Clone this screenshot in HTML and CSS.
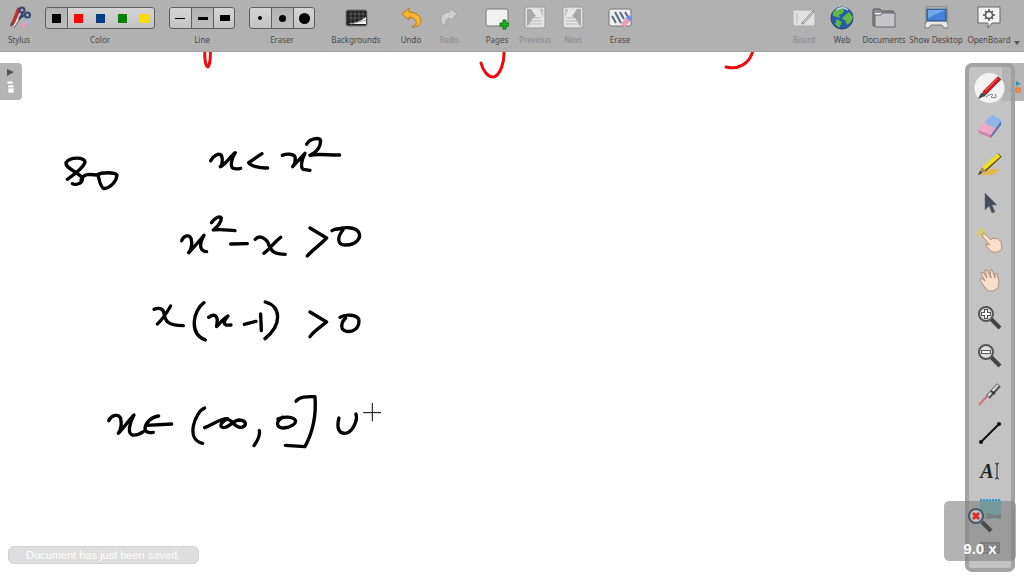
FILE: index.html
```html
<!DOCTYPE html>
<html lang="en">
<head>
<meta charset="utf-8">
<title>OpenBoard</title>
<link rel="stylesheet" href="styles.css">
</head>
<body>
<header class="toolbar">
  <div class="section">
    <button class="tool"><svg class="icon" viewBox="0 0 24 24"><path d="M5 20L12 2" stroke="#b9352d" stroke-width="3.500"/><path d="M3 21l1-5 3 1z" fill="#555"/><path d="M7 21L15 7" stroke="#eee" stroke-width="2.500"/><path d="M7 22L16 8" stroke="#555" stroke-width="1"/><g fill="none" stroke="#34466f" stroke-width="2"><circle cx="15" cy="4" r="2.500"/><circle cx="20.500" cy="9" r="2.500"/><path d="M16 6l-4 8M18 9l-6 3"/></g><path d="M13 19l6-5 3 2-5 6z" fill="#e59cbd"/><path d="M17 16l3-3 3 2-2 3z" fill="#a3b6e6"/></svg><span>Stylus</span></button>
  </div>
  <div class="group">
    <div class="segment" role="group" aria-label="Color">
      <button class="choice on" aria-label="Black"><i class="swatch black"></i></button><button class="choice plain" aria-label="Red"><i class="swatch red"></i></button><button class="choice plain" aria-label="Blue"><i class="swatch blue"></i></button><button class="choice plain" aria-label="Green"><i class="swatch green"></i></button><button class="choice plain" aria-label="Yellow"><i class="swatch yellow"></i></button>
    </div>
    <span>Color</span>
  </div>
  <div class="group">
    <div class="segment" role="group" aria-label="Line">
      <button class="choice" aria-label="Fine line"><i class="line fine"></i></button><button class="choice on" aria-label="Medium line"><i class="line medium"></i></button><button class="choice" aria-label="Strong line"><i class="line strong"></i></button>
    </div>
    <span>Line</span>
  </div>
  <div class="group">
    <div class="segment" role="group" aria-label="Eraser">
      <button class="choice" aria-label="Small eraser"><i class="dot small"></i></button><button class="choice on" aria-label="Medium eraser"><i class="dot mid"></i></button><button class="choice" aria-label="Large eraser"><i class="dot large"></i></button>
    </div>
    <span>Eraser</span>
  </div>
  <div class="section bounded">
    <button class="tool wide"><svg class="icon" viewBox="0 0 24 24"><rect x="2" y="4" width="21" height="16" rx="2" fill="#222" stroke="#777"/><path d="M4 8h17M4 12h17M7 5v13M11 5v13M15 5v13M19 5v13" stroke="#777" stroke-width=".6"/><path d="M4 18c7-1 13-3 18-7v7z" fill="#f4f4f4"/><path d="M7 18l15-4" stroke="#999"/></svg><span>Backgrounds</span></button>
  </div>
  <div class="section">
    <button class="tool"><svg class="icon" viewBox="0 0 24 24"><path d="M3 8l7-6v4c7 0 12 4 12 9 0 4-4 6-9 6 4-2 5-4 4-6-1-2-3-4-7-4v3z" fill="#fcb52e" stroke="#b7771a"/></svg><span>Undo</span></button>
    <button class="tool" disabled><svg class="icon" viewBox="0 0 24 24"><path d="M20 8l-7-6v4C7 6 4 10 4 14c0 4 2 5 7 5-3-1-3-3-2-4 1-2 2-3 4-3v3z" fill="#d2d2d2" stroke="#a4a4a4"/></svg><span>Redo</span></button>
  </div>
  <div class="section pages">
    <button class="tool"><svg class="icon" viewBox="0 0 24 24"><rect x="1" y="3" width="22" height="17" rx="2" fill="#f1f1f1" stroke="#777"/><path d="M18 14h3v3h3v3h-3v3h-3v-3h-3v-3h3z" fill="#12b51b" stroke="#08750c"/></svg><span>Pages</span></button>
    <button class="tool" disabled><svg class="icon" viewBox="0 0 24 24"><rect x="2" y="1" width="20" height="21" rx="2" fill="#e6e6e6" stroke="#999"/><path d="M4 3h16v17H4z" fill="#a8a8a8"/><path d="M8 3h9l1 3 2 1v13H5l5-8 3-2-3-4z" fill="#ececec"/><path d="M17 3h3v9z" fill="#c2c2c2"/><path d="M10 12h8M8 15h11M6 18h13" stroke="#b8b8b8"/></svg><span>Previous</span></button>
    <button class="tool" disabled><svg class="icon" viewBox="0 0 24 24"><rect x="2" y="1" width="20" height="21" rx="2" fill="#e6e6e6" stroke="#999"/><path d="M4 3h16v17H4z" fill="#a8a8a8"/><path d="M16 3H7L6 6 4 7v13h15l-5-8-3-2 3-4z" fill="#ececec"/><path d="M7 3H4v9z" fill="#c2c2c2"/><path d="M6 12h8M5 15h11M5 18h13" stroke="#b8b8b8"/></svg><span>Next</span></button>
  </div>
  <div class="section last">
    <button class="tool"><svg class="icon" viewBox="0 0 24 24"><rect x="1" y="3" width="22" height="17" rx="2" fill="#efefef" stroke="#777"/><path d="M4 10l4 7M7 6l6 11M12 6l4 7M17 6l3 5" stroke="#596b84" stroke-width="2"/><path d="M13 18l5-6 4 3-5 6z" fill="#f199bb"/><path d="M18 12l3-3 3 3-2 3z" fill="#6d8fe2"/></svg><span>Erase</span></button>
  </div>
  <nav class="section modes">
    <button class="tool" disabled><svg class="icon" viewBox="0 0 24 24"><rect x="1" y="4" width="22" height="16" rx="1" fill="#e7e7e7" stroke="#aaa"/><path d="M5 7v10" stroke="#bbb"/><path d="M10 18L22 5" stroke="#888" stroke-width="2.500"/><path d="M11 17L21 6" stroke="#eee"/></svg><span>Board</span></button>
    <button class="tool"><svg class="icon" viewBox="0 0 24 24"><circle cx="12" cy="12" r="11" fill="#245ca8" stroke="#274169"/><path d="M3 6l5-4 6 1-1 4-4 2 1 3-3-1-4-1zM14 10l5-4 4 5-2 5-4 3-2-5-3-1zM7 13l5 3-3 6-4-4z" fill="#62b744"/><path d="M6 4c4-3 9-3 12 0" fill="none" stroke="#bfdeee" stroke-width="1.500"/></svg><span>Web</span></button>
    <button class="tool docs"><svg class="icon" viewBox="0 0 24 24"><path d="M1 20V4q0-1 1-1h6l2 2h11v15z" fill="#8d8d92" stroke="#555"/><path d="M3 7h16v5H3z" fill="#f1f1f1"/><path d="M3 20V9h6l1-2h13v14H4z" fill="#c5c5ca" stroke="#66666c"/></svg><span>Documents</span></button>
    <button class="tool desk"><svg class="icon" viewBox="0 0 24 24"><path d="M2 1h21v16h1v5h-4l-2-3H7l-2 3H1v-5h1z" fill="#e7e7e7" stroke="#777"/><rect x="3" y="3" width="19" height="12" fill="#4384da" stroke="#24456f"/><path d="M4 4h17L4 12z" fill="#74a8ec"/></svg><span>Show Desktop</span></button>
    <button class="tool brand"><svg class="icon" viewBox="0 0 24 24"><path d="M1 1h22v16h-8l-4 5v-5H1z" fill="#f4f4f4" stroke="#666"/><circle cx="12" cy="9" r="3.500" fill="none" stroke="#555" stroke-width="1.500"/><path d="M12 3v3M12 12v3M6 9h3M15 9h3M8 5l2 2M14 11l2 2M8 13l2-2M14 7l2-2" stroke="#555" stroke-width="1.500"/></svg><span>OpenBoard</span></button>
    <button class="more" aria-label="More"></button>
  </nav>
</header>
<main class="board">
  <svg class="ink" viewBox="0 52 1024 524" role="img" aria-label="Handwritten inequality working">
    <g stroke="#ec0b0e" stroke-width="3">
      <path d="M205 46C204 60 206 67 208 67C210 64 211 58 210 46"/>
      <path d="M481 63C483 71 488 77 493 77C500 76 505 63 504 47"/>
      <path d="M726 67C738 70 750 64 753 50"/>
    </g>
    <g stroke="#000" stroke-width="10" transform="translate(50 130) scale(.3333)">
      <path d="M105 98C106 80 60 80 48 98C46 118 92 128 97 146C98 162 76 166 67 161M105 98C98 116 72 134 52 148M93 150C100 130 120 132 146 136M140 135C155 126 195 126 201 135C200 155 180 175 162 176C150 170 148 150 145 138"/>
      <path d="M482 92C490 76 508 68 514 76C520 88 516 108 511 110C525 105 540 80 556 68C545 85 540 108 548 114Q558 119 572 115"/>
      <path d="M636 71L596 98C600 108 630 115 653 114"/>
      <path d="M697 76C712 70 730 72 735 80C738 95 732 105 728 110L765 70C755 90 750 112 760 118L780 121"/>
      <path d="M770 43C778 26 808 20 812 32C812 50 800 68 780 76C800 70 840 76 869 75"/>
      <path d="M395 332C402 316 418 313 423 325C430 345 420 363 416 368C430 355 450 330 462 316C448 340 447 364 470 365"/>
      <path d="M484 278C495 264 510 256 514 264C514 280 500 292 490 300C510 296 535 301 555 302M542 342L592 341"/>
      <path d="M616 328C625 316 645 320 655 340C660 360 670 373 706 373M692 322C675 335 660 355 642 370"/>
      <path d="M780 294L830 324C810 345 785 362 772 378"/>
      <path d="M846 302C860 294 870 294 879 300C862 320 860 346 887 345C920 345 935 323 926 306C915 290 880 291 860 298"/>
    </g>
    <g stroke="#000" stroke-width="10" transform="translate(50 270) scale(.3333)">
      <path d="M312 118C325 112 340 115 342 130C345 150 350 167 400 167M362 108C352 125 337 150 322 162"/>
      <path d="M462 98C430 120 415 190 466 210M646 96C695 110 696 165 645 206"/>
      <path d="M476 142C490 132 500 134 502 150L500 170C510 160 520 145 534 138C520 155 515 168 543 165M583 163L618 154M632 132L634 182"/>
      <path d="M780 126L830 156C810 172 790 185 780 200"/>
      <path d="M870 142C885 132 925 132 927 152C927 175 910 187 890 184C870 180 872 158 887 144"/>
      <path d="M176 452C185 435 205 430 212 445C216 465 212 480 205 490C225 470 240 445 252 435C238 460 232 490 247 495C260 497 273 490 280 485"/>
      <path d="M326 438C305 440 287 458 285 474C285 486 295 490 310 487M290 466L365 462"/>
      <path d="M464 414C435 425 405 510 458 520"/>
      <path d="M464 473C490 462 515 445 533 446C515 454 505 470 520 473C540 472 550 450 568 450C592 452 590 468 575 472C555 475 550 455 538 450"/>
      <path d="M628 482C632 500 620 515 612 527M698 442C675 455 680 473 700 474C724 472 740 461 736 451C730 439 700 439 684 447"/>
      <path d="M738 394C750 378 775 380 795 380C799 430 792 480 765 530L706 526"/>
      <path d="M867 444C860 470 864 490 885 490C908 489 924 450 918 432"/>
      <path d="M967 400V453M941 428H992" stroke-width="3"/>
    </g>
  </svg>

  <button class="navigator" aria-label="Show page navigator"><svg viewBox="0 0 22 37"><path d="M7 6l7 3-7 4z" fill="#555"/><g fill="#fff" stroke="#aaa" stroke-width=".6"><rect x="7" y="18" width="6" height="3"/><rect x="8" y="22" width="6" height="3"/><rect x="8" y="25" width="6" height="5"/></g></svg></button>

  <button class="library" aria-label="Show library"><svg viewBox="0 0 22 38"><path d="M11 8l-3 2 3 2z" fill="#555"/><path d="M5 19l5-2v5z" fill="#b5ad55"/><path d="M14 18l5 3-5 2z" fill="#3a8fbd"/><path d="M5 24h5v5H5z" fill="#a3a064"/><circle cx="16" cy="27" r="2" fill="none" stroke="#e6823a" stroke-width="2"/></svg></button>

  <aside class="palette" aria-label="Stylus palette">
    <button aria-label="Pen"><svg viewBox="0 0 32 32"><circle cx="15.500" cy="16" r="15" fill="#f3f3f3"/><path d="M12 25c5-4 9-3 5 0 5 2 6 0 4-3" fill="none" stroke="#777"/><path d="M9 23L26 6" stroke="#555" stroke-width="4"/><path d="M10 21L25 6" stroke="#d8161c" stroke-width="4"/><path d="M11 19L24 6" stroke="#f77"/><path d="M4 27l3-6 4 3z" fill="#444"/></svg></button>
    <button aria-label="Eraser"><svg viewBox="0 0 32 32"><path d="M4 20L14 8l13 5-10 14z" fill="#edaac8"/><path d="M14 8l5-3 8 5v4l-4 5-12-6z" fill="#8fb6e6"/><path d="M4 20l13 5v3L5 23z" fill="#d483ab"/><path d="M17 25L27 11v4L17 28z" fill="#5876a8"/></svg></button>
    <button aria-label="Highlighter"><svg viewBox="0 0 32 32"><path d="M9 24l8-4h9l-7 6H6z" fill="#e5b64b"/><path d="M10 21L26 6" stroke="#665411" stroke-width="5"/><path d="M9 20L25 6" stroke="#f5dd23" stroke-width="4"/><path d="M4 26l4-8 4 4z" fill="#a88b55"/><path d="M4 26l2-4 2 2z" fill="#333"/></svg></button>
    <button aria-label="Select"><svg viewBox="0 0 32 32"><path d="M11 6v17l4-4 3 7 3-1-3-7h5z" fill="#464b5c" stroke="#777" stroke-width=".6"/></svg></button>
    <button aria-label="Interact"><svg viewBox="0 0 32 32"><path d="M7 3v9M2 8h10M4 4l7 7M11 4l-7 7" stroke="#dac967" stroke-width="1.500"/><path d="M8 9q2-2 4 1l5 5 2-2 2 1 2-1 4 4 1 7-4 3h-6l-5-5-1-3 4 1-7-8z" fill="#f8dfcc" stroke="#a77f67" stroke-width=".8"/></svg></button>
    <button aria-label="Scroll"><svg viewBox="0 0 32 32"><path d="M10 22l-4-6 1-2 4 3-4-8 2-1 4 6-2-8h2l4 8-1-8h2l3 8V9l2 1 2 8-1 6-5 3h-5z" fill="#f8dfcc" stroke="#a77f67" stroke-width=".8"/></svg></button>
    <button aria-label="Zoom in"><svg viewBox="0 0 32 32"><path d="M17 17l9 9" stroke="#444" stroke-width="4"/><circle cx="12" cy="12" r="7" fill="#ddd" stroke="#555" stroke-width="2"/><path d="M12 7v10M7 12h10" stroke="#555" stroke-width="4"/><path d="M12 8v8M8 12h8" stroke="#fff" stroke-width="2"/></svg></button>
    <button aria-label="Zoom out"><svg viewBox="0 0 32 32"><path d="M17 17l9 9" stroke="#444" stroke-width="4"/><circle cx="12" cy="12" r="7" fill="#ddd" stroke="#555" stroke-width="2"/><path d="M7 12h10" stroke="#555" stroke-width="4"/><path d="M8 12h8" stroke="#fff" stroke-width="2"/></svg></button>
    <button aria-label="Laser pointer"><svg viewBox="0 0 32 32"><path d="M5 26l10-11" stroke="#cf747c" stroke-width="2"/><path d="M14 18L25 6" stroke="#555" stroke-width="5"/><path d="M14 17L24 6" stroke="#ddd" stroke-width="2"/><path d="M17 12l4 3" stroke="#333" stroke-width="2"/></svg></button>
    <button aria-label="Line"><svg viewBox="0 0 32 32"><path d="M7 25L25 7" stroke="#111" stroke-width="2"/><circle cx="7" cy="25" r="2" fill="#111"/><circle cx="25" cy="7" r="2" fill="#111"/></svg></button>
    <button class="write" aria-label="Text"><span>A</span><svg viewBox="0 0 6 18"><path d="M1 1q2 0 2 2v12q0 2-2 2M5 1q-2 0-2 2M5 17q-2 0-2-2" fill="none" stroke="#222"/></svg></button>
    <button aria-label="Capture"><svg viewBox="0 0 32 32"><rect x="6" y="6" width="21" height="19" fill="#69bdc4"/><path d="M6 6h21" stroke="#3993c8" stroke-width="2" stroke-dasharray="2 1"/><path d="M12 24l15-3M12 20l15 4" stroke="#777" stroke-width="2"/></svg></button>
    <button aria-label="Virtual keyboard"><svg viewBox="0 0 32 32"><rect x="6" y="10" width="20" height="12" rx="1" fill="#777"/><path d="M8 13h16M8 16h16M8 19h16" stroke="#ddd" stroke-dasharray="2 1"/></svg></button>
  </aside>

  <div class="zoom" role="status">
    <svg viewBox="0 0 28 26"><path d="M16 15l9 9" stroke="#484848" stroke-width="4"/><circle cx="10" cy="9" r="7" fill="#b7c6d0" stroke="#4b5663" stroke-width="2"/><path d="M7 6l6 6M13 6l-6 6" stroke="#df2b20" stroke-width="3"/></svg>
    <span>9.0 x</span>
  </div>
  <p class="message" role="status">Document has just been saved.</p>
</main>
</body>
</html>
```

FILE: styles.css
```css
* {
  box-sizing: border-box;
}

body {
  margin: 0;
  height: 100vh;
  display: flex;
  flex-direction: column;
  background: #fff;
  font: 8px/12px "Noto Sans", sans-serif;
  color: #4a4a4a;
  overflow: hidden;
}

button {
  margin: 0;
  padding: 0;
  border: 0;
  background: none;
  font: inherit;
  color: inherit;
}

svg {
  display: block;
  fill: none;
}

.toolbar {
  flex: none;
  display: flex;
  height: 52px;
  background: #b1b1b1;
  border-bottom: 1px solid #a2a2a2;
  white-space: nowrap;
}

.section {
  display: flex;
}

.tool,
.group {
  display: flex;
  flex-direction: column;
  align-items: center;
  gap: 4px;
  padding-top: 6px;
}

.tool {
  width: 38px;
}

.tool:disabled {
  color: #8b8b8b;
}

.tool:disabled .icon {
  opacity: 0.9;
}

.icon {
  width: 24px;
  height: 24px;
}

.group {
  margin-left: 7px;
}

.group + .group {
  margin-left: 14px;
}

.segment {
  display: flex;
  height: 22px;
  margin: 1px 0;
  outline: 1px solid #5e5e5e;
  outline-offset: -1px;
  border-radius: 3px;
  background: linear-gradient(#d6d6d6, #c2c2c2);
  overflow: hidden;
}

.choice {
  display: flex;
  align-items: center;
  justify-content: center;
  width: 22px;
}

.choice + .choice {
  border-left: 1px solid #5e5e5e;
}

.choice.plain + .plain {
  border-left: 0;
}

.choice.on {
  background: linear-gradient(#b2b2b2, #bebebe);
}

.swatch {
  width: 9px;
  height: 9px;
}

.black { background: #000; }
.red { background: #fc0006; }
.blue { background: #043d82; }
.green { background: #068106; }
.yellow { background: #fbdc00; }

.line {
  width: 10px;
  background: #000;
}

.fine { height: 1px; }
.medium { height: 3px; }
.strong { height: 6px; }

.dot {
  border-radius: 50%;
  background: #000;
}

.small { width: 4px; height: 4px; }
.mid { width: 7px; height: 7px; }
.large { width: 11px; height: 11px; }

.bounded {
  margin: 0 4px 0 9px;
  border: 1px solid #adadad;
  border-width: 0 1px;
}

.wide { width: 62px; }
.pages { margin: 0 9px 0 10px; }

.modes {
  margin-left: auto;
}

.docs { width: 46px; }
.desk { width: 58px; }
.brand { width: 48px; }

.more {
  align-self: flex-end;
  margin: 0 4px 6px 1px;
  border: 3px solid transparent;
  border-top: 4px solid #555;
  border-bottom: 0;
}

.board {
  position: relative;
  flex: 1;
  min-height: 0;
}

.ink {
  position: absolute;
  top: 0;
  left: 0;
  width: 1024px;
  height: 524px;
  stroke-linecap: round;
  stroke-linejoin: round;
}

.navigator {
  position: absolute;
  top: 11px;
  left: 0;
  width: 22px;
  background: #b5b5b5;
  border-radius: 0 4px 4px 0;
}

.library {
  position: absolute;
  top: 11px;
  right: 0;
  width: 22px;
  background: #b5b5b5;
}

.palette {
  position: absolute;
  top: 11px;
  right: 9px;
  bottom: 4px;
  width: 50px;
  display: flex;
  flex-direction: column;
  padding: 2px 0 1px;
  border: 4px solid rgba(155, 155, 155, 0.8);
  border-radius: 7px;
  background: rgba(180, 180, 180, 0.8);
}

.palette button {
  flex: 1;
  min-height: 0;
  display: flex;
  align-items: center;
  justify-content: center;
}

.palette svg {
  width: 32px;
  height: 32px;
}

.palette .write {
  font: italic bold 20px/24px "Liberation Serif", serif;
  color: #222;
}

.palette .write svg {
  width: 6px;
  height: 18px;
}

.zoom {
  position: absolute;
  right: 8px;
  bottom: 15px;
  width: 72px;
  height: 60px;
  display: flex;
  flex-direction: column;
  align-items: center;
  justify-content: flex-end;
  gap: 8px;
  padding-bottom: 4px;
  border-radius: 5px;
  background: rgba(128, 128, 128, 0.6);
  color: #fff;
  font: bold 15px/16px "Liberation Sans", sans-serif;
}

.zoom svg {
  width: 28px;
  height: 26px;
}

.message {
  position: absolute;
  left: 8px;
  bottom: 12px;
  margin: 0;
  padding: 0 18px 0 17px;
  border: 1px solid #d2d2d2;
  border-radius: 6px;
  background: #dedede;
  color: #fff;
  font: 11px/16px "Liberation Sans", sans-serif;
}
```
